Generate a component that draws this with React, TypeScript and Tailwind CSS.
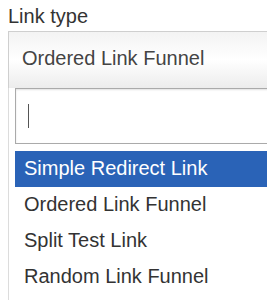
export default function App() {
  const options = ['Simple Redirect Link', 'Ordered Link Funnel', 'Split Test Link', 'Random Link Funnel'];

  return (
    <div className="w-[267px] h-[300px] overflow-hidden bg-white font-['Liberation_Sans',Arial,sans-serif]">
      <div className="w-[340px] pl-2 pt-1">
        <label className="block text-[20px] leading-6 text-[#333]">Link type</label>

        {/* select box, open */}
        <div className="mt-[3px] h-[57px] border border-b-0 border-[#cfcfcf] bg-gradient-to-b from-[#f3f3f3] via-white to-[#ececec] flex items-center pl-[13px] pb-[5px]">
          <span className="text-[20px] leading-6 text-[#444]">Ordered Link Funnel</span>
        </div>

        {/* dropdown */}
        <div className="border-l border-[#dcdcdc] pl-[6px]">
          <div className="h-[56px] border border-[#aaa] bg-white shadow-[inset_0_1px_2px_rgba(0,0,0,0.12)] flex items-center pl-3">
            <span className="block w-px h-6 bg-[#555]" />
          </div>

          <ul className="mt-[7px]">
            {options.map((opt, i) => (
              <li
                key={opt}
                className={`h-9 flex items-center pl-[9px] pb-[3px] text-[20px] leading-6 ${
                  i === 0 ? 'bg-[#2a63b7] text-white' : 'text-[#333]'
                }`}
              >
                {opt}
              </li>
            ))}
            <li className="pl-[6px] mt-[4px] text-[20px] leading-5 text-[#888]">Weighted Random Link Funnel</li>
          </ul>
        </div>
      </div>
    </div>
  );
}
